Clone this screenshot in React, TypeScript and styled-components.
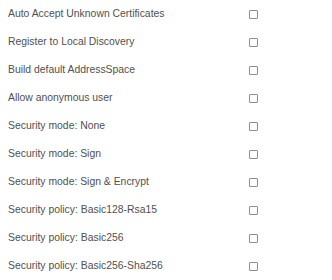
import { FC } from 'react';
import styled, { createGlobalStyle } from 'styled-components';

const options = [
  'Auto Accept Unknown Certificates',
  'Register to Local Discovery',
  'Build default AddressSpace',
  'Allow anonymous user',
  'Security mode: None',
  'Security mode: Sign',
  'Security mode: Sign & Encrypt',
  'Security policy: Basic128-Rsa15',
  'Security policy: Basic256',
  'Security policy: Basic256-Sha256',
];

const App: FC = () => {
  return (
    <>
      <GlobalStyle />
      <StyledList>
        {options.map((label) => (
          <StyledRow key={label}>
            <StyledLabel>{label}</StyledLabel>
            <StyledCheck type="checkbox" aria-label={label} />
          </StyledRow>
        ))}
      </StyledList>
    </>
  );
};

export default App;

const GlobalStyle = createGlobalStyle`
  body {
    margin: 0;
    background: #fff;
    font-family: "Liberation Sans", Arial, sans-serif;
  }
`;

const StyledList = styled.div`
  width: 332px;
  padding: 0 0 0 8px;
  box-sizing: border-box;
`;

const StyledRow = styled.label`
  display: grid;
  grid-template-columns: 241px 10px;
  align-items: center;
  height: 28px;
`;

const StyledLabel = styled.span`
  font-size: 10.4px;
  line-height: 12px;
  padding-bottom: 1px;
  color: #505050;
  white-space: nowrap;
`;

const StyledCheck = styled.input`
  appearance: none;
  margin: 1px 0 0 0;
  width: 9px;
  height: 9px;
  border: 1px solid #8e8e8e;
  border-radius: 1px;
  background: #fff;
  box-sizing: border-box;
`;
